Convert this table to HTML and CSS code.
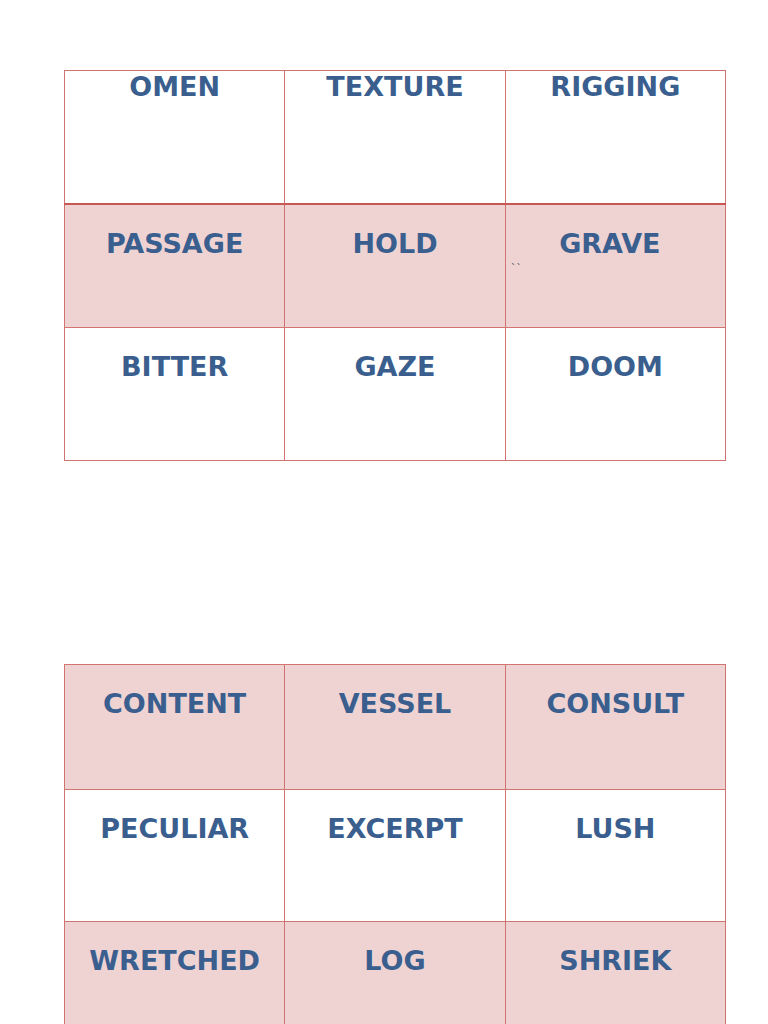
FILE: index.html
```html
<!DOCTYPE html>
<html>
<head>
<meta charset="utf-8">
<link rel="stylesheet" href="styles.css">
</head>
<body>
<div class="page">
  <table class="grid first">
    <tr class="row r-tall top-row">
      <td>OMEN</td><td>TEXTURE</td><td>RIGGING</td>
    </tr>
    <tr class="row r-short shaded thick-top">
      <td>PASSAGE</td><td>HOLD</td><td class="mark-cell">GRAVE<span class="mark">``</span></td>
    </tr>
    <tr class="row r-tall">
      <td>BITTER</td><td>GAZE</td><td>DOOM</td>
    </tr>
  </table>

  <table class="grid second">
    <tr class="row r-mid shaded">
      <td>CONTENT</td><td>VESSEL</td><td>CONSULT</td>
    </tr>
    <tr class="row r-mid2">
      <td>PECULIAR</td><td>EXCERPT</td><td>LUSH</td>
    </tr>
    <tr class="row r-tall shaded">
      <td>WRETCHED</td><td>LOG</td><td>SHRIEK</td>
    </tr>
  </table>
</div>
</body>
</html>
```

FILE: styles.css
```css
html, body {
  margin: 0;
  padding: 0;
  background: #ffffff;
}

.page {
  padding: 70px 0 0 64px;
  display: flex;
  flex-direction: column;
  gap: 203px;
}

.grid {
  width: 662px;
  border-collapse: collapse;
  table-layout: fixed;
  font-family: "DejaVu Sans", "Liberation Sans", sans-serif;
  font-weight: bold;
  font-size: 27px;
  color: #3a5f8f;
}

.grid td {
  border: 1px solid #cf7471;
  text-align: center;
  vertical-align: top;
  padding: 23px 0 0 0;
  line-height: 31px;
  box-sizing: border-box;
}

.r-tall td { height: 133px; }
.r-short td { height: 124px; }
.r-mid td { height: 125px; }
.r-mid2 td { height: 132px; }

.top-row td { padding-top: 0; }

.shaded td { background: #efd3d3; }

.thick-top td { border-top: 2px solid #c95855; }

.grid td.mark-cell {
  position: relative;
  padding-right: 11px;
}

.mark {
  position: absolute;
  left: 5px;
  top: 58px;
  font-size: 11px;
  line-height: 11px;
  font-weight: normal;
  color: #555555;
}
```
